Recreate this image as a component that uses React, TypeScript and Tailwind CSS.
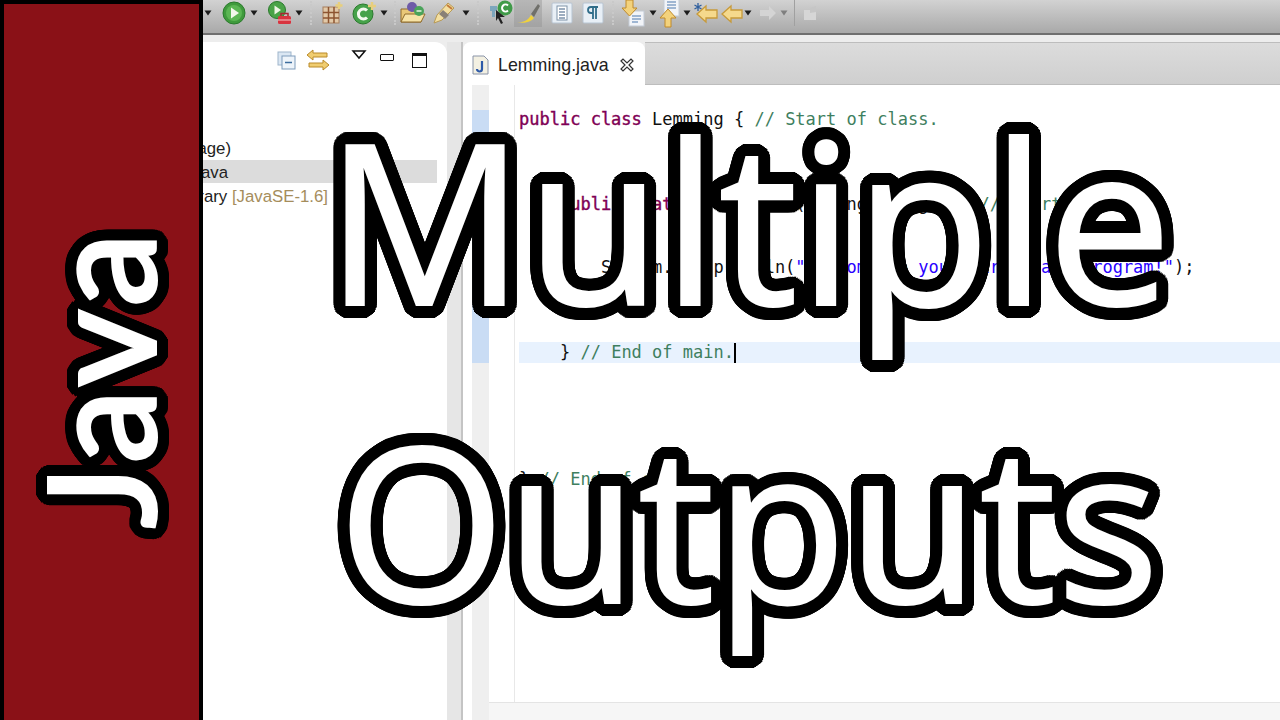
const Caret = ({ className = "" }: { className?: string }) => (
  <svg width="10" height="6" viewBox="0 0 10 6" className={`shrink-0 ${className}`}>
    <path d="M1.5 0.5h7L5 5.5z" fill="#1c1c1c" />
  </svg>
);

const Sep = ({ className = "" }: { className?: string }) => (
  <div className={`h-[24px] w-[2px] shrink-0 border-l-2 border-dotted border-[#c9c9c9] ${className}`} />
);

const PlayIcon = () => (
  <svg width="24" height="24" viewBox="0 0 24 24" className="shrink-0">
    <circle cx="12" cy="12" r="11" fill="#3f9a3c" stroke="#2a7a2c" />
    <circle cx="12" cy="12" r="8" fill="#5bb653" />
    <path d="M9 6.5l8 5.5-8 5.5z" fill="#f2f7ea" />
  </svg>
);

const DebugIcon = () => (
  <svg width="26" height="24" viewBox="0 0 26 24" className="shrink-0">
    <circle cx="10" cy="9" r="8.5" fill="#4aa347" stroke="#2a7a2c" />
    <path d="M7.5 4.5l6.5 4.5-6.5 4.5z" fill="#eef5e4" />
    <rect x="11" y="15" width="13" height="8" rx="1.5" fill="#d8343f" />
    <path d="M14 15v-2.5h7V15" fill="none" stroke="#a82530" strokeWidth="1.5" />
    <path d="M11 19h13" stroke="#f4c9cb" />
  </svg>
);

const PackageIcon = () => (
  <svg width="24" height="24" viewBox="0 0 24 24" className="shrink-0">
    <rect x="2" y="6" width="16" height="16" fill="#e2c9a8" stroke="#a87f5c" />
    <path d="M7.5 6v16M13 6v16M2 11.5h16M2 17h16" stroke="#8d5430" strokeWidth="1.5" />
    <path d="M18 1v7M14.5 4.5h7" stroke="#e8cf7c" strokeWidth="2.5" />
  </svg>
);

const ClassIcon = () => (
  <svg width="26" height="24" viewBox="0 0 26 24" className="shrink-0">
    <circle cx="11" cy="13" r="10" fill="#46a24a" stroke="#2a7a2c" />
    <path d="M15 9.5a5 5 0 1 0 0 7" fill="none" stroke="#f3f8ee" strokeWidth="3" />
    <path d="M20 1v8M16 5h8" stroke="#e8cf7c" strokeWidth="2.5" />
  </svg>
);

const FolderIcon = () => (
  <svg width="26" height="24" viewBox="0 0 26 24" className="shrink-0">
    <path d="M1 8h8l2 2h10v11H1z" fill="#e9c878" stroke="#8f6a2a" />
    <path d="M1 21l4-8h20l-4 8z" fill="#f7e3a6" stroke="#8f6a2a" />
    <circle cx="12" cy="6" r="5" fill="#6d5aa8" />
    <circle cx="19" cy="10" r="5" fill="#4aa35a" />
    <path d="M16.5 10h5" stroke="#e6f4e0" strokeWidth="1.5" />
  </svg>
);

const PenIcon = () => (
  <svg width="26" height="24" viewBox="0 0 26 24" className="shrink-0">
    <path d="M2 22l3-8 11-12 6 5-12 12z" fill="#f4dfa0" stroke="#b89a55" />
    <path d="M7 13l6 5 4-4-6-5z" fill="#8a8176" />
    <path d="M15 4l5 4" stroke="#c47b3a" strokeWidth="2" />
  </svg>
);

const TypeIcon = () => (
  <svg width="26" height="26" viewBox="0 0 26 26" className="shrink-0">
    <path d="M2 6h7v5H7v6H4v-6H2z" fill="#7da6bd" />
    <circle cx="17" cy="8" r="7.5" fill="#3f9a48" />
    <path d="M20 5.5a3.5 3.5 0 1 0 0 5" fill="none" stroke="#fff" strokeWidth="2" />
    <path d="M8 10l9 7h-5l3 6-2 1-3-6-2 3z" fill="#222" />
  </svg>
);

const BrushIcon = () => (
  <svg width="28" height="24" viewBox="0 0 28 24">
    <path d="M2 21c6 1 12-1 15-7l3 3c-3 4-10 6-18 4z" fill="#f0d23c" />
    <path d="M17 13l7-10 2 2-6 11z" fill="#6f6f6a" />
  </svg>
);

const DocIcon = () => (
  <svg width="22" height="22" viewBox="0 0 22 22" className="shrink-0">
    <rect x="1" y="1" width="20" height="20" rx="1" fill="#e8eff6" stroke="#b7c4d2" />
    <rect x="6" y="4" width="10" height="14" fill="#fff" stroke="#7f93a8" />
    <path d="M8 7h6M8 10h6M8 13h6M8 16h6" stroke="#3b5a80" />
  </svg>
);

const ParaIcon = () => (
  <svg width="22" height="22" viewBox="0 0 22 22" className="shrink-0">
    <rect x="1" y="1" width="20" height="20" rx="1" fill="#e8eff6" stroke="#b7c4d2" />
    <path d="M11 5H9a3 3 0 0 0 0 6h2M11 5v12M14 5v12M9 5h7" fill="none" stroke="#2f6d8a" strokeWidth="1.8" />
  </svg>
);

const ArrowDownDoc = () => (
  <svg width="24" height="28" viewBox="0 0 24 28" className="shrink-0">
    <rect x="8" y="12" width="15" height="15" fill="#f2f4f8" stroke="#c3cbd6" />
    <path d="M11 17h9M11 20h9M11 23h6" stroke="#4d79ad" />
    <path d="M5 1h7v8h4l-7.5 8L1 9h4z" fill="#f3d27c" stroke="#c08a2a" />
  </svg>
);

const ArrowUpDoc = () => (
  <svg width="24" height="30" viewBox="0 0 24 30" className="shrink-0">
    <rect x="7" y="0" width="15" height="18" fill="#f2f4f8" stroke="#c3cbd6" />
    <path d="M10 4h9M10 7h9M10 10h9" stroke="#4d79ad" />
    <path d="M8 29h6v-9h5l-8-9-8 9h5z" fill="#f3d27c" stroke="#c08a2a" />
  </svg>
);

const ArrowLeft = ({ star }: { star?: boolean }) => (
  <svg width="26" height="22" viewBox="0 0 26 22" className="shrink-0">
    {star && <path d="M4 1v8M0.5 3l7 4M0.5 7l7-4" stroke="#2f5f9e" strokeWidth="1.3" />}
    <path d="M3 12l9-8v4h11v8H12v4z" fill="#f5d98c" stroke="#c79a3a" strokeWidth="1.3" />
  </svg>
);

const ArrowRightGray = () => (
  <svg width="20" height="18" viewBox="0 0 20 18" className="shrink-0">
    <path d="M18 9l-7-7v4H2v6h9v4z" fill="#d4d4d4" />
  </svg>
);

const GrayTool = () => (
  <svg width="16" height="16" viewBox="0 0 16 16" className="shrink-0">
    <rect x="1" y="5" width="12" height="10" fill="#d6d6d6" />
    <path d="M7 3l6-2v6l-6 1z" fill="#c6c6c6" />
  </svg>
);

const CollapseAll = () => (
  <svg width="19" height="19" viewBox="0 0 19 19" className="shrink-0">
    <rect x="1" y="1" width="13" height="13" fill="#dbe7f3" stroke="#9fb6cc" />
    <rect x="5" y="5" width="13" height="13" fill="#eef4fa" stroke="#7e9cbb" />
    <path d="M8 11.5h7" stroke="#3d6d9e" strokeWidth="1.6" />
  </svg>
);

const LinkArrows = () => (
  <svg width="24" height="22" viewBox="0 0 24 22" className="shrink-0">
    <path d="M1 6l6-5v3h14v4H7v3z" fill="#f0cd70" stroke="#b98a2a" />
    <path d="M23 16l-6-5v3H3v4h14v3z" fill="#f0cd70" stroke="#b98a2a" />
  </svg>
);

const CloseTab = () => (
  <svg width="16" height="16" viewBox="0 0 16 16" className="shrink-0">
    <path
      d="M2 4l2-2 4 4 4-4 2 2-4 4 4 4-2 2-4-4-4 4-2-2 4-4z"
      fill="#fff"
      stroke="#333"
      strokeWidth="1.2"
    />
  </svg>
);

const keyword = "text-[#7f0055] [-webkit-text-stroke:0.4px_#7f0055]";

const codeLines: { indent: string; parts: [string, string][] }[] = [
  {
    indent: "",
    parts: [
      ["public class ", keyword],
      ["Lemming { ", "text-[#111]"],
      ["// Start of class.", "text-[#3f7f5f]"],
    ],
  },
  { indent: "", parts: [] },
  { indent: "", parts: [] },
  { indent: "", parts: [] },
  {
    indent: "    ",
    parts: [
      ["public static void ", keyword],
      ["main(String[] args) { ", "text-[#111]"],
      ["// Start of main.", "text-[#3f7f5f]"],
    ],
  },
  { indent: "", parts: [] },
  { indent: "", parts: [] },
  {
    indent: "        ",
    parts: [
      ["System.out.println(", "text-[#111]"],
      ['"Welcome to your first Java program!"', "text-[#2a00ff]"],
      [");", "text-[#111]"],
    ],
  },
  { indent: "", parts: [] },
  { indent: "", parts: [] },
  { indent: "", parts: [] },
  {
    indent: "    ",
    parts: [
      ["} ", "text-[#111]"],
      ["// End of main.", "text-[#3f7f5f]"],
    ],
  },
  { indent: "", parts: [] },
  { indent: "", parts: [] },
  { indent: "", parts: [] },
  { indent: "", parts: [] },
  { indent: "", parts: [] },
  {
    indent: "",
    parts: [
      ["} ", "text-[#111]"],
      ["// End of class.", "text-[#3f7f5f]"],
    ],
  },
];

// round outline: rings of hard shadows, -webkit-text-stroke only gives mitred corners
const ring = (radius: number, steps: number) =>
  Array.from({ length: steps }, (_, i) => {
    const a = (i / steps) * Math.PI * 2;
    return `${(Math.cos(a) * radius).toFixed(1)}px ${(Math.sin(a) * radius).toFixed(1)}px 0 #000`;
  });
const outline = [...ring(13, 48), ...ring(9, 32), ...ring(5, 16)].join(",");

export default function App() {
  return (
    <div className="relative flex h-[720px] w-[1280px] overflow-hidden bg-[#ededed]">
      {/* Red banner */}
      <div className="z-10 flex h-full w-[203px] shrink-0 items-center justify-center border-x-4 border-t-4 border-black bg-[#8a1117] pr-[8px] pt-[32px]">
        <span
          className="rotate-180 font-['Lato',sans-serif] text-[148px] leading-none tracking-[5px] text-white [-webkit-text-stroke:4px_#fff] [writing-mode:vertical-rl]"
          style={{ textShadow: outline }}
        >
          Java
        </span>
      </div>

      <div className="flex min-w-0 flex-1 flex-col">
        {/* Toolbar */}
        <div className="flex h-[35px] shrink-0 items-center overflow-hidden border-b-2 border-[#6f6f6f] bg-gradient-to-b from-[#d2d2d2] to-[#a9a9a9] pb-[8px]">
          <Caret />
          <div className="ml-[9px]"><PlayIcon /></div>
          <Caret className="ml-[3px]" />
          <div className="ml-[8px]"><DebugIcon /></div>
          <Caret className="ml-[1px]" />
          <Sep className="ml-[6px]" />
          <div className="ml-[9px]"><PackageIcon /></div>
          <div className="ml-[7px]"><ClassIcon /></div>
          <Caret className="ml-[1px]" />
          <Sep className="ml-[5px]" />
          <div className="ml-[4px]"><FolderIcon /></div>
          <div className="ml-[6px]"><PenIcon /></div>
          <Caret className="ml-[3px]" />
          <Sep className="ml-[6px]" />
          <div className="ml-[9px]"><TypeIcon /></div>
          <div className="flex h-[28px] w-[28px] shrink-0 items-center justify-center bg-[#8f8f8f]/40">
            <BrushIcon />
          </div>
          <div className="ml-[9px]"><DocIcon /></div>
          <div className="ml-[9px]"><ParaIcon /></div>
          <Sep className="ml-[8px]" />
          <div className="ml-[7px]"><ArrowDownDoc /></div>
          <Caret className="ml-[3px]" />
          <div className="-ml-[1px]"><ArrowUpDoc /></div>
          <Caret className="ml-[1px]" />
          <div className="ml-[2px]"><ArrowLeft star /></div>
          <div className="-ml-[1px]"><ArrowLeft /></div>
          <Caret className="-ml-[2px]" />
          <div className="ml-[5px]"><ArrowRightGray /></div>
          <div className="ml-[1px] opacity-40"><Caret /></div>
          <div className="ml-[5px] h-[26px] w-px shrink-0 bg-[#a0a0a0]" />
          <div className="ml-[8px]"><GrayTool /></div>
        </div>

        <div className="flex min-h-0 flex-1 pt-[7px]">
          {/* Package explorer */}
          <div className="flex w-[244px] shrink-0 flex-col overflow-hidden rounded-tr-xl bg-white">
            <div className="flex h-[31px] items-center pt-[5px]">
              <div className="ml-[74px]"><CollapseAll /></div>
              <div className="ml-[10px]"><LinkArrows /></div>
              <svg width="16" height="10" viewBox="0 0 16 10" className="ml-[21px] -translate-y-[5px]">
                <path d="M2 1h12L8 8z" fill="#fff" stroke="#111" strokeWidth="1.5" />
              </svg>
              <div className="ml-[13px] h-[7px] w-[14px] -translate-y-[3px] rounded-[1px] border-[1.5px] border-[#111]" />
              <div className="ml-[18px] h-[15px] w-[15px] border-[1.5px] border-t-[3px] border-[#111]" />
            </div>
            <div className="mt-[63px] flex flex-col font-['Liberation_Sans',sans-serif] text-[16.8px] leading-[22px] text-[#222]">
              <div className="flex justify-end whitespace-nowrap pr-[216px] pt-[2px]">(default package)</div>
              <div className="mr-[10px] flex h-[23px] justify-end whitespace-nowrap bg-[#dcdcdc] pr-[209px] pt-[2px]">Lemming.java</div>
              <div className="flex justify-end whitespace-nowrap pr-[119px] pt-[3px]">
                <span>JRE System Library&nbsp;</span>
                <span className="text-[#a58d5c]">[JavaSE-1.6]</span>
              </div>
            </div>
          </div>

          {/* Sash */}
          <div className="w-[16px] shrink-0 border-r-2 border-[#c4c4c4] bg-[#e6e6e6]" />

          {/* Editor */}
          <div className="flex min-w-0 flex-1 flex-col">
            <div className="flex h-[43px] shrink-0">
              <div className="flex w-[182px] shrink-0 items-center rounded-t-lg bg-white pl-[9px] pt-[3px]">
                <svg width="17" height="20" viewBox="0 0 17 20" className="shrink-0">
                  <path d="M1 1h11l4 4v14H1z" fill="#f3f0e2" stroke="#8a94a8" />
                  <path d="M10 6v8a2.5 2.5 0 0 1-5 0" fill="none" stroke="#2e5aa8" strokeWidth="2.2" />
                </svg>
                <span className="ml-[9px] font-['Liberation_Sans',sans-serif] text-[17.8px] text-[#222]">
                  Lemming.java
                </span>
                <div className="ml-[10px]"><CloseTab /></div>
              </div>
              <div className="flex-1 border-y border-[#bdbdbd] bg-gradient-to-b from-[#dcdcdc] to-[#cfcfcf]" />
            </div>

            <div className="flex min-h-0 flex-1 bg-white">
              <div className="w-[9px] shrink-0" />
              <div className="flex w-[17px] shrink-0 flex-col bg-[#efefef]">
                <div className="h-[25px] shrink-0" />
                <div className="h-[253px] shrink-0 bg-[#c9dcf4]" />
              </div>
              <div className="flex min-w-0 flex-1 flex-col">
                <div className="flex min-h-0 flex-1">
                  <div className="w-[26px] shrink-0 border-r border-[#e8e8e8]" />
                  <div className="min-w-0 flex-1 pt-[24px] font-['DejaVu_Sans_Mono',monospace] text-[17px] leading-[21.2px]">
                    {codeLines.map((line, i) => (
                      <div
                        key={i}
                        className={`ml-[4px] h-[21.2px] whitespace-pre ${i === 11 ? "bg-[#e8f2fe]" : ""}`}
                      >
                        {line.indent}
                        {line.parts.map(([text, cls], j) => (
                          <span key={j} className={cls}>
                            {text}
                          </span>
                        ))}
                        {i === 11 && (
                          <span className="inline-block h-[20px] w-[2px] bg-black align-middle" />
                        )}
                      </div>
                    ))}
                  </div>
                </div>
                <div className="h-[18px] shrink-0 border-t border-[#e4e4e4] bg-[#f6f6f6]" />
              </div>
            </div>
          </div>
        </div>
      </div>

      {/* Title over the screenshot */}
      <div className="absolute left-[217px] right-0 top-[68px] z-20 flex flex-col items-center font-['Open_Sans',sans-serif] leading-[301px] text-white [-webkit-text-stroke:2px_#fff]">
        <div className="text-[223px]" style={{ textShadow: outline }}>Multiple</div>
        <div className="text-[216px]" style={{ textShadow: outline }}>Outputs</div>
      </div>
    </div>
  );
}
